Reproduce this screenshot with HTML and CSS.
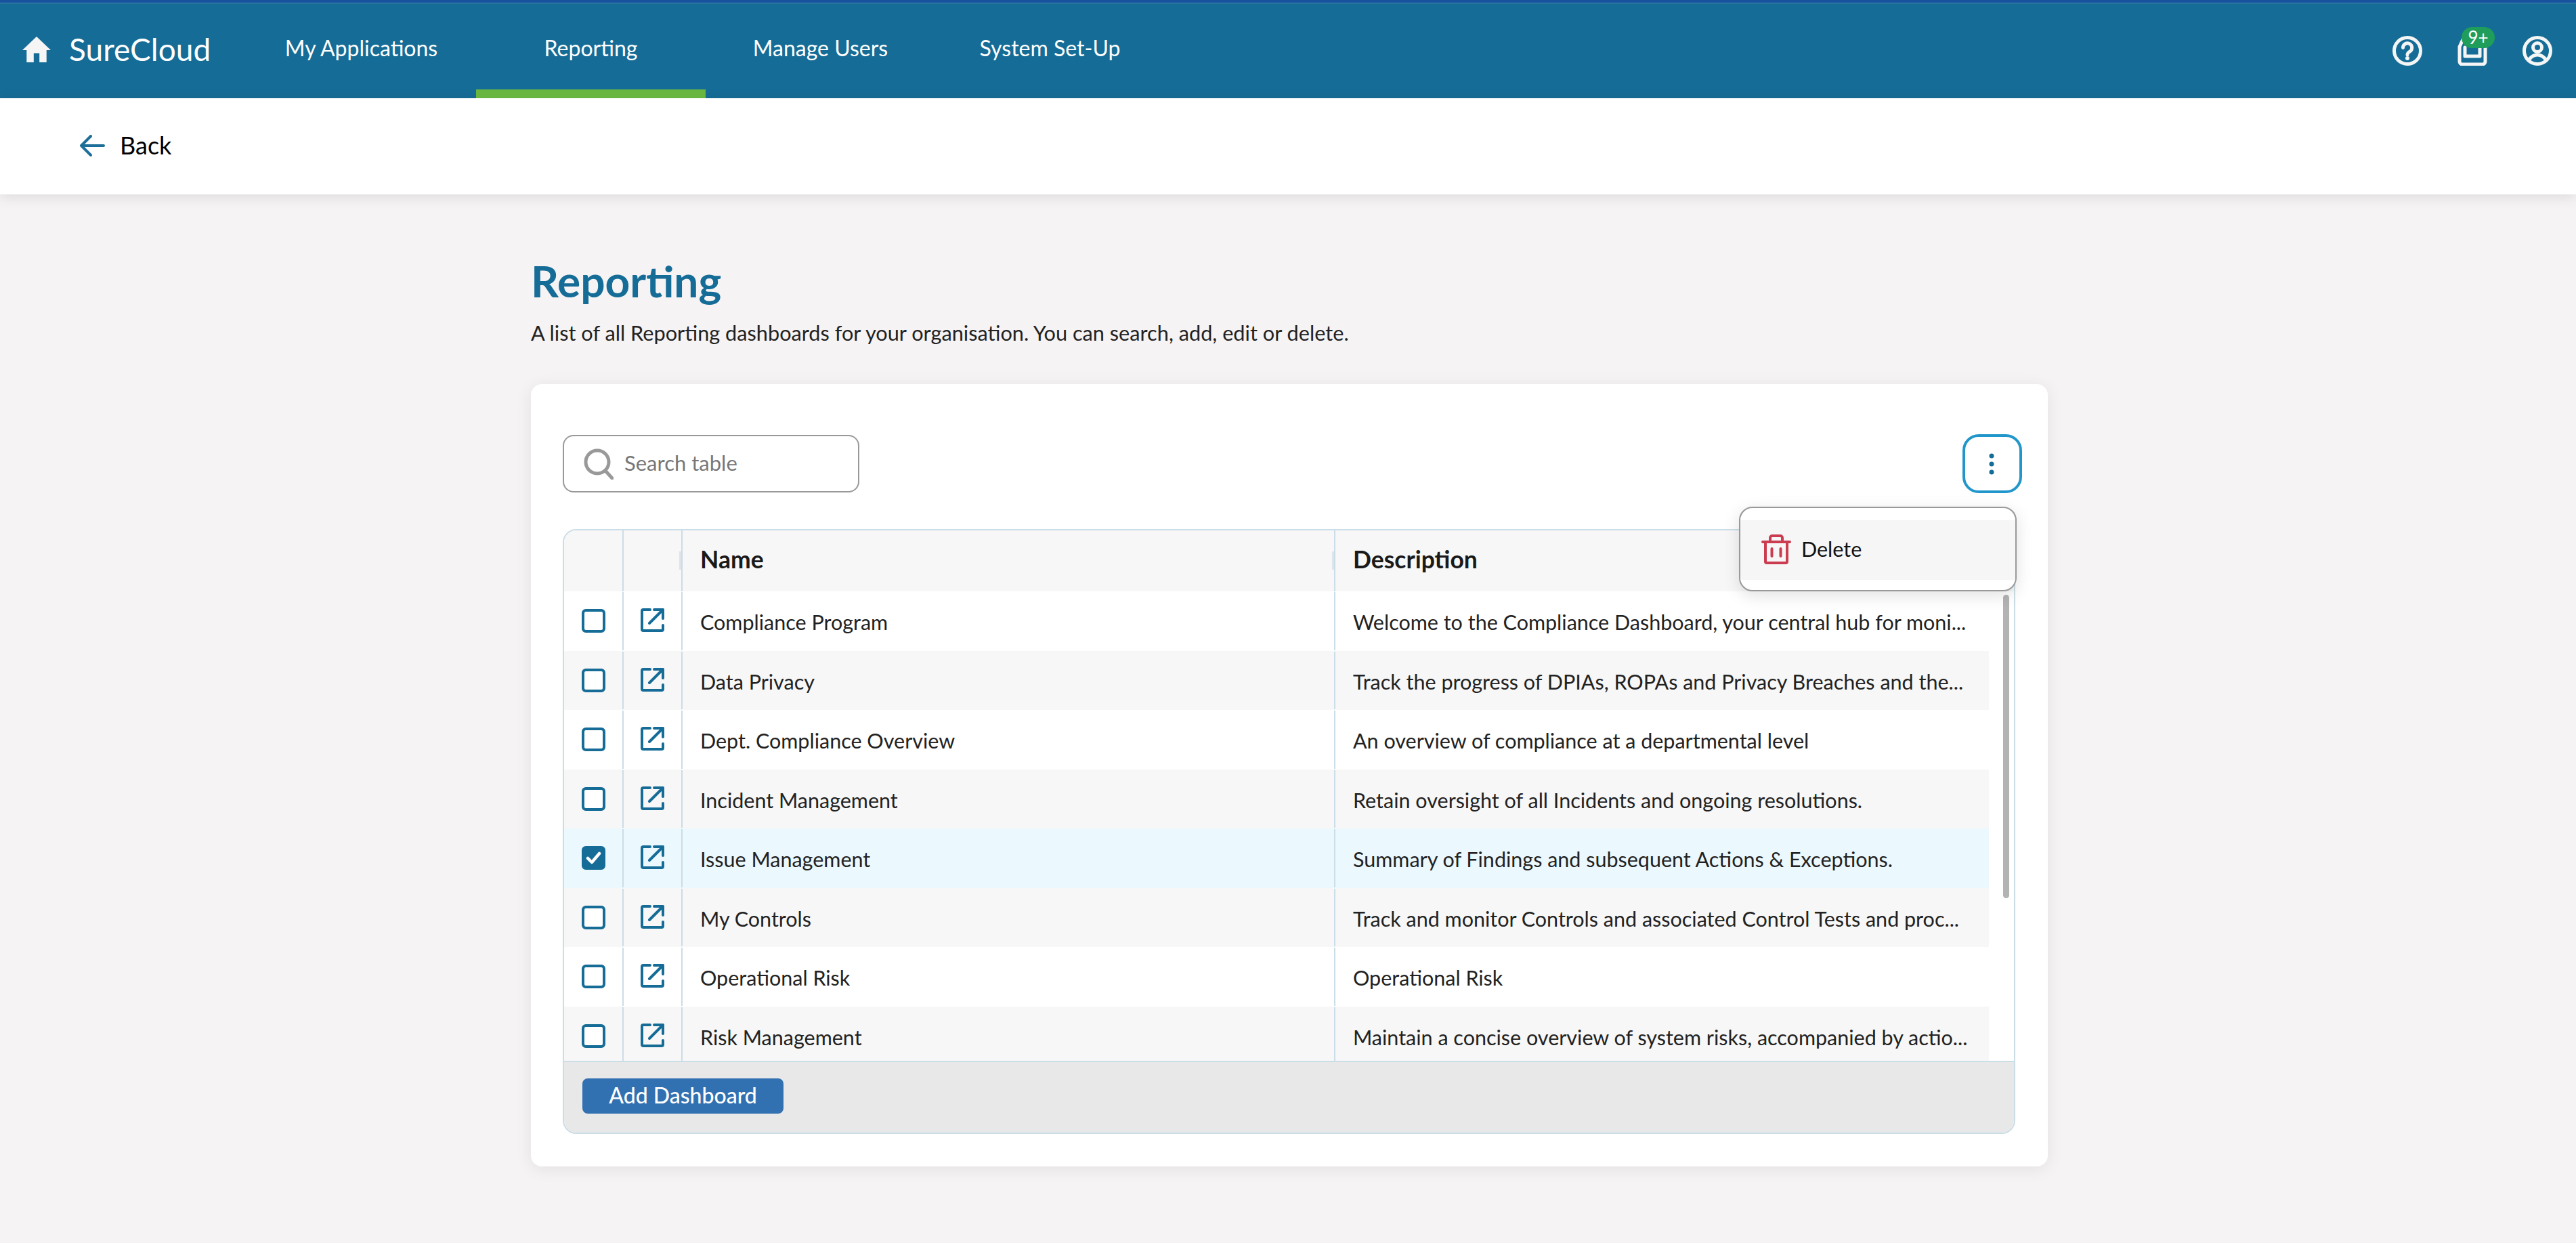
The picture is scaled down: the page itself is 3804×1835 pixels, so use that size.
FILE: index.html
```html
<!DOCTYPE html>
<html lang="en">

<head>
    <meta charset="UTF-8">
    <meta name="viewport" content="width=device-width, initial-scale=1.0">
    <title>Reporting - SureCloud</title>
    <link rel="stylesheet" href="styles.css">
</head>

<body>
    <header class="top-nav">
        <a class="brand">
            <svg class="home-icon" viewBox="2 3 20 17" preserveAspectRatio="none"><path d="M10 20v-6h4v6h5v-8h3L12 3 2 12h3v8z"/></svg>
            <span>SureCloud</span>
        </a>
        <nav class="nav-tabs">
            <a class="nav-tab">My Applications</a>
            <a class="nav-tab active">Reporting</a>
            <a class="nav-tab">Manage Users</a>
            <a class="nav-tab">System Set-Up</a>
        </nav>
        <div class="nav-icons">
            <svg class="nav-icon" viewBox="0 0 44 44">
                <circle cx="22" cy="22" r="19.5"/>
                <path d="M15.5 17.5a6.6 6.6 0 1 1 10 5.6c-2.4 1.5-3.5 2.4-3.5 4.6"/>
                <circle class="solid" cx="22" cy="33" r="3"/>
            </svg>
            <div class="inbox">
                <svg class="nav-icon" viewBox="0 0 44 44">
                    <path d="M9 3 3 16v22a4 4 0 0 0 4 4h30a4 4 0 0 0 4-4V16L35 3z"/>
                    <path d="M11 17v13h22V17"/>
                </svg>
                <span class="badge">9+</span>
            </div>
            <svg class="nav-icon" viewBox="0 0 44 44">
                <circle cx="22" cy="22" r="19.5"/>
                <circle cx="22" cy="17" r="6.5"/>
                <path d="M9 36c3.500-5.500 8-8 13-8s9.500 2.500 13 8"/>
            </svg>
        </div>
    </header>

    <div class="back-bar">
        <a class="back-link">
            <svg class="back-icon" viewBox="0 0 37 32"><path d="M16 2 2 16l14 14M2 16h33"/></svg>
            <span>Back</span>
        </a>
    </div>

    <main class="page">
        <h1>Reporting</h1>
        <p class="intro">A list of all Reporting dashboards for your organisation. You can search, add, edit or delete.</p>

        <section class="card">
            <div class="toolbar">
                <label class="search">
                    <svg class="search-icon" viewBox="0 0 44 46"><circle cx="20" cy="20" r="17"/><path d="M32 33l10 11"/></svg>
                    <span>Search table</span>
                </label>
                <button class="kebab">
                    <svg viewBox="0 0 8 32"><circle cx="4" cy="4" r="3.500"/><circle cx="4" cy="16" r="3.500"/><circle cx="4" cy="28" r="3.500"/></svg>
                </button>
            </div>

            <div class="menu">
                <div class="menu-item">
                    <svg class="trash-icon" viewBox="0 0 44 44"><path d="M2 11h40M6 11v29a2 2 0 0 0 2 2h28a2 2 0 0 0 2-2V11M13 11V5a3 3 0 0 1 3-3h12a3 3 0 0 1 3 3v6M15.500 21v11M28.500 21v11"/></svg>
                    <span>Delete</span>
                </div>
            </div>

            <div class="table">
                <div class="thead">
                    <div class="cell cell-check"></div>
                    <div class="cell cell-link grip"></div>
                    <div class="cell cell-name grip">Name</div>
                    <div class="cell cell-desc">Description</div>
                </div>

                <div class="tbody">
                    <div class="rows">
                        <div class="row">
                            <div class="cell cell-check"><span class="checkbox"></span></div>
                            <div class="cell cell-link"><svg class="open-icon" viewBox="0 0 35 35"><path d="M14 2H4a2 2 0 0 0-2 2v27a2 2 0 0 0 2 2h27a2 2 0 0 0 2-2v-6M20 2h13v13M33 2 13 22"/></svg></div>
                            <div class="cell cell-name">Compliance Program</div>
                            <div class="cell cell-desc">Welcome to the Compliance Dashboard, your central hub for moni...</div>
                        </div>
                        <div class="row">
                            <div class="cell cell-check"><span class="checkbox"></span></div>
                            <div class="cell cell-link"><svg class="open-icon" viewBox="0 0 35 35"><path d="M14 2H4a2 2 0 0 0-2 2v27a2 2 0 0 0 2 2h27a2 2 0 0 0 2-2v-6M20 2h13v13M33 2 13 22"/></svg></div>
                            <div class="cell cell-name">Data Privacy</div>
                            <div class="cell cell-desc">Track the progress of DPIAs, ROPAs and Privacy Breaches and the...</div>
                        </div>
                        <div class="row">
                            <div class="cell cell-check"><span class="checkbox"></span></div>
                            <div class="cell cell-link"><svg class="open-icon" viewBox="0 0 35 35"><path d="M14 2H4a2 2 0 0 0-2 2v27a2 2 0 0 0 2 2h27a2 2 0 0 0 2-2v-6M20 2h13v13M33 2 13 22"/></svg></div>
                            <div class="cell cell-name">Dept. Compliance Overview</div>
                            <div class="cell cell-desc">An overview of compliance at a departmental level</div>
                        </div>
                        <div class="row">
                            <div class="cell cell-check"><span class="checkbox"></span></div>
                            <div class="cell cell-link"><svg class="open-icon" viewBox="0 0 35 35"><path d="M14 2H4a2 2 0 0 0-2 2v27a2 2 0 0 0 2 2h27a2 2 0 0 0 2-2v-6M20 2h13v13M33 2 13 22"/></svg></div>
                            <div class="cell cell-name">Incident Management</div>
                            <div class="cell cell-desc">Retain oversight of all Incidents and ongoing resolutions.</div>
                        </div>
                        <div class="row selected">
                            <div class="cell cell-check">
                                <span class="checkbox checked"><svg viewBox="0 0 35 35"><path d="M9 18l6 6 11-13"/></svg></span>
                            </div>
                            <div class="cell cell-link"><svg class="open-icon" viewBox="0 0 35 35"><path d="M14 2H4a2 2 0 0 0-2 2v27a2 2 0 0 0 2 2h27a2 2 0 0 0 2-2v-6M20 2h13v13M33 2 13 22"/></svg></div>
                            <div class="cell cell-name">Issue Management</div>
                            <div class="cell cell-desc">Summary of Findings and subsequent Actions &amp; Exceptions.</div>
                        </div>
                        <div class="row">
                            <div class="cell cell-check"><span class="checkbox"></span></div>
                            <div class="cell cell-link"><svg class="open-icon" viewBox="0 0 35 35"><path d="M14 2H4a2 2 0 0 0-2 2v27a2 2 0 0 0 2 2h27a2 2 0 0 0 2-2v-6M20 2h13v13M33 2 13 22"/></svg></div>
                            <div class="cell cell-name">My Controls</div>
                            <div class="cell cell-desc">Track and monitor Controls and associated Control Tests and proc...</div>
                        </div>
                        <div class="row">
                            <div class="cell cell-check"><span class="checkbox"></span></div>
                            <div class="cell cell-link"><svg class="open-icon" viewBox="0 0 35 35"><path d="M14 2H4a2 2 0 0 0-2 2v27a2 2 0 0 0 2 2h27a2 2 0 0 0 2-2v-6M20 2h13v13M33 2 13 22"/></svg></div>
                            <div class="cell cell-name">Operational Risk</div>
                            <div class="cell cell-desc">Operational Risk</div>
                        </div>
                        <div class="row">
                            <div class="cell cell-check"><span class="checkbox"></span></div>
                            <div class="cell cell-link"><svg class="open-icon" viewBox="0 0 35 35"><path d="M14 2H4a2 2 0 0 0-2 2v27a2 2 0 0 0 2 2h27a2 2 0 0 0 2-2v-6M20 2h13v13M33 2 13 22"/></svg></div>
                            <div class="cell cell-name">Risk Management</div>
                            <div class="cell cell-desc">Maintain a concise overview of system risks, accompanied by actio...</div>
                        </div>
                    </div>
                    <div class="scroll-track"><div class="scroll-thumb"></div></div>
                </div>

                <div class="tfoot">
                    <button class="add-btn">Add Dashboard</button>
                </div>
            </div>
        </section>
    </main>
</body>

</html>
```

FILE: styles.css
```css
:root {
    --primary: #156c96;
    --accent: #68b63f;
    --bg: #f5f3f4;
    --line: #cbdde6;
    --stripe: #f7f7f7;
}

* {
    box-sizing: border-box;
}

body {
    font-family: Lato, 'Noto Sans', sans-serif;
    color: #222;
    background: var(--bg);
    margin: 0;
    height: 1835px;
    overflow: hidden;
}

/* top bar */
.top-nav {
    display: flex;
    height: 145px;
    background: var(--primary);
    border-top: 4px solid #17529f;
    box-shadow: inset 0 1px #4d8bb0;
    color: #fff;
}

.brand {
    display: flex;
    align-items: center;
    gap: 27px;
    width: 364px;
    padding: 0 0 4px 33px;
    font-size: 46px;
}

.home-icon {
    width: 42px;
    height: 38px;
    fill: #f5f5f5;
}

.nav-tabs {
    display: flex;
}

.nav-tab {
    display: flex;
    align-items: center;
    justify-content: center;
    width: 339px;
    padding-top: 5px;
    font-size: 32px;
    border-bottom: 13px solid transparent;
}

.nav-tab.active {
    border-bottom-color: var(--accent);
}

.nav-icons {
    display: flex;
    align-items: center;
    gap: 52px;
    margin-left: auto;
    padding-right: 35px;
}

.nav-icon {
    display: block;
    width: 44px;
    height: 44px;
    fill: none;
    stroke: #f5f5f5;
    stroke-width: 5;
    stroke-linecap: round;
    stroke-linejoin: round;
}

.nav-icon .solid {
    fill: #f5f5f5;
    stroke: none;
}

.inbox {
    position: relative;
}

.badge {
    position: absolute;
    top: -13px;
    left: 6px;
    width: 49px;
    height: 31px;
    border-radius: 16px;
    background: #1f9d5b;
    font-size: 26px;
    line-height: 30px;
    text-align: center;
}

/* back bar */
.back-bar {
    display: flex;
    align-items: center;
    height: 142px;
    padding: 0 0 2px 118px;
    background: #fff;
    box-shadow: 0 4px 18px rgba(0, 0, 0, 0.1);
}

.back-link {
    display: flex;
    align-items: center;
    gap: 22px;
    font-size: 36px;
    color: #000;
}

.back-link span {
    margin-bottom: 3px;
}

.back-icon {
    width: 37px;
    height: 32px;
    fill: none;
    stroke: #1d6f99;
    stroke-width: 4;
    stroke-linecap: round;
    stroke-linejoin: round;
}

/* page */
.page {
    width: 2240px;
    margin-left: 784px;
}

h1 {
    margin: 88px 0 0;
    font-size: 64px;
    line-height: 80px;
    font-weight: 700;
    color: var(--primary);
}

.intro {
    margin: 15px 0 0;
    font-size: 30.7px;
    line-height: 44px;
}

.card {
    position: relative;
    height: 1155px;
    margin-top: 53px;
    padding: 74px 47px 0;
    background: #fff;
    border-radius: 16px;
    box-shadow: 0 4px 24px rgba(0, 0, 0, 0.08);
}

.toolbar {
    display: flex;
    justify-content: space-between;
    align-items: center;
    height: 87px;
}

.search {
    display: flex;
    align-items: center;
    gap: 16px;
    width: 438px;
    height: 85px;
    padding-left: 29px;
    border: 2px solid #999;
    border-radius: 16px;
    font-size: 31px;
    color: #777;
}

.search span {
    margin-bottom: 4px;
}

.search-icon {
    width: 44px;
    height: 46px;
    fill: none;
    stroke: #999;
    stroke-width: 5;
    stroke-linecap: round;
}

.kebab {
    display: flex;
    align-items: center;
    justify-content: center;
    width: 88px;
    height: 87px;
    margin-right: -9px;
    padding: 0 3px 0 0;
    border: 4px solid #2196cb;
    border-radius: 24px;
    background: #fff;
}

.kebab svg {
    width: 8px;
    height: 32px;
    fill: var(--primary);
}

.menu {
    position: absolute;
    z-index: 2;
    top: 181px;
    right: 46px;
    width: 410px;
    height: 125px;
    padding: 18px 0;
    border: 2px solid #999;
    border-radius: 20px;
    background: #fff;
    box-shadow: 0 6px 24px rgba(0, 0, 0, 0.12);
}

.menu-item {
    display: flex;
    align-items: center;
    gap: 15px;
    height: 88px;
    padding: 0 0 2px 31px;
    background: #f6f6f6;
    font-size: 30.5px;
    color: #111;
}

.menu-item span {
    margin-bottom: 3px;
}

.trash-icon {
    width: 44px;
    height: 44px;
    fill: none;
    stroke: #cb3c50;
    stroke-width: 4;
    stroke-linecap: round;
    stroke-linejoin: round;
}

/* table */
.table {
    margin-top: 53px;
    width: 2145px;
    height: 893px;
    border: 2px solid var(--line);
    border-radius: 20px;
    overflow: hidden;
    font-size: 30.5px;
}

.thead {
    display: flex;
    height: 90px;
    background: var(--stripe);
    font-size: 35.5px;
    font-weight: 700;
    color: #1a1a1a;
}

.tbody {
    display: flex;
    height: 693px;
    overflow: hidden;
}

.rows {
    width: 2104px;
    flex: none;
}

.row {
    display: flex;
    height: 87.5px;
}

.row:nth-child(even) {
    background: var(--stripe);
}

.row.selected {
    background: #ebf8fe;
}

.cell {
    position: relative;
    display: flex;
    align-items: center;
    margin: 1px 0;
    padding-top: 3px;
    border-right: 2px solid var(--line);
}

.thead .cell {
    padding-top: 0;
    padding-bottom: 6px;
    margin: 0;
}

.cell-check {
    justify-content: center;
    width: 88px;
    padding: 0;
}

.cell-link {
    justify-content: center;
    width: 87px;
    padding: 0;
}

.cell-name {
    width: 964px;
    padding-left: 26px;
}

.cell-desc {
    flex: 1;
    padding-left: 26px;
    border-right: 0;
    white-space: nowrap;
}

.grip::after {
    content: '';
    position: absolute;
    right: 0;
    top: 31px;
    width: 3px;
    height: 27px;
    background: #dfe3ea;
}

.checkbox {
    display: block;
    width: 35px;
    height: 35px;
    border: 4px solid var(--primary);
    border-radius: 6px;
    background: #fff;
}

.checkbox.checked {
    position: relative;
    background: var(--primary);
}

.checkbox svg {
    display: block;
    width: 35px;
    height: 35px;
    margin: -4px;
    fill: none;
    stroke: #fff;
    stroke-width: 4.5;
    stroke-linecap: round;
    stroke-linejoin: round;
}

.open-icon {
    width: 35px;
    height: 35px;
    margin-top: -2px;
    fill: none;
    stroke: var(--primary);
    stroke-width: 4;
    stroke-linecap: round;
    stroke-linejoin: round;
}

.scroll-track {
    flex: 1;
    padding: 5px 7px 0 21px;
}

.scroll-thumb {
    height: 448px;
    border-radius: 6px;
    background: #b3b3b3;
}

.tfoot {
    height: 107px;
    padding: 24px 0 0 27px;
    background: #e8e8e8;
    border-top: 2px solid var(--line);
}

.add-btn {
    display: block;
    width: 297px;
    height: 52px;
    padding: 0 0 3px;
    border: 0;
    border-radius: 8px;
    background: #3271b1;
    color: #fff;
    font-family: inherit;
    font-size: 32px;
    font-weight: 500;
}
```
